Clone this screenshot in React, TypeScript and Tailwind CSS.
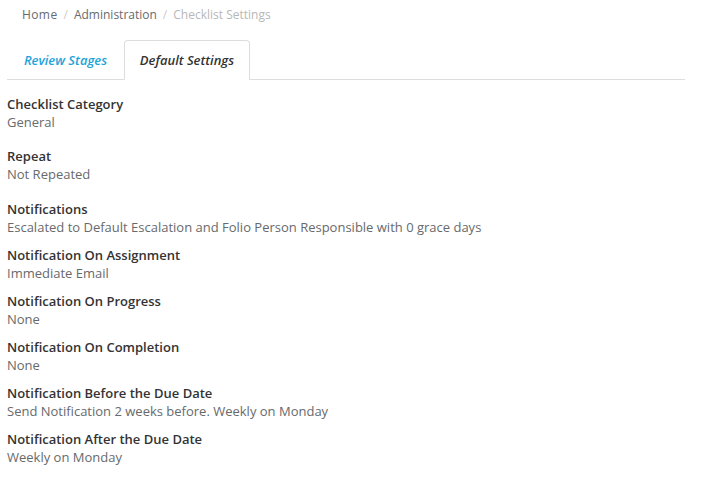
import React from 'react';

const fields: Array<{ label: string; value: string; gap: string }> = [
  { label: 'Checklist Category', value: 'General', gap: 'mb-[16px]' },
  { label: 'Repeat', value: 'Not Repeated', gap: 'mb-[17px]' },
  { label: 'Notifications', value: 'Escalated to Default Escalation and Folio Person Responsible with 0 grace days', gap: 'mb-[10px]' },
  { label: 'Notification On Assignment', value: 'Immediate Email', gap: 'mb-[10px]' },
  { label: 'Notification On Progress', value: 'None', gap: 'mb-[10px]' },
  { label: 'Notification On Completion', value: 'None', gap: 'mb-[10px]' },
  { label: 'Notification Before the Due Date', value: 'Send Notification 2 weeks before. Weekly on Monday', gap: 'mb-[10px]' },
  { label: 'Notification After the Due Date', value: 'Weekly on Monday', gap: 'mb-[10px]' },
];

export default function App() {
  return (
    <div className="min-h-[502px] w-[717px] bg-white font-['Open_Sans',sans-serif] text-[13px] leading-[18px] text-[#676a6c]">
      {/* Breadcrumb */}
      <div className="flex items-center pl-[22px] pt-[6px] h-[23px] text-[12px]">
        <span className="tracking-[0.4px]">Home</span>
        <span className="px-[6px] text-[#ccc]">/</span>
        <span>Administration</span>
        <span className="px-[6px] text-[#ccc]">/</span>
        <span className="text-[#b8b8b8]">Checklist Settings</span>
      </div>

      {/* Tabs */}
      <div className="ml-[7px] mr-[32px] mt-[17px] flex border-b border-[#ddd]">
        <div className="h-[39px] w-[117px] flex items-center justify-center italic font-semibold text-[#1ea3d8]">
          Review Stages
        </div>
        <div className="-mb-px h-[40px] w-[126px] flex items-center justify-center italic font-semibold text-[#333] bg-white border border-[#ddd] border-b-white rounded-t-[4px]">
          Default Settings
        </div>
      </div>

      {/* Fields */}
      <div className="pl-[7px] pt-[15px]">
        {fields.map((f) => (
          <div key={f.label} className={f.gap}>
            <div className="font-semibold text-[#333]">{f.label}</div>
            <div>{f.value}</div>
          </div>
        ))}
      </div>
    </div>
  );
}
